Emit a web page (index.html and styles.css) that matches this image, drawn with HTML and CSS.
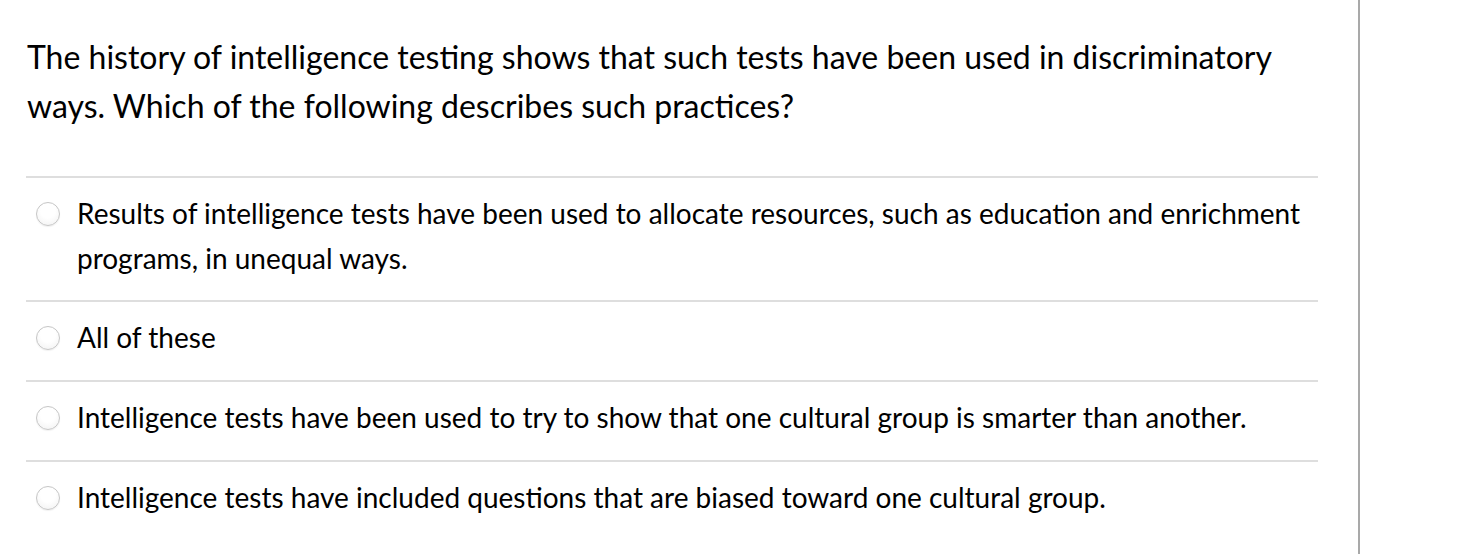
FILE: index.html
```html
<!DOCTYPE html>
<html>
<head>
<meta charset="utf-8">
<link rel="stylesheet" href="styles.css">
</head>
<body>
<div class="page">
  <main class="quiz">
    <div class="question-text">The history of intelligence testing shows that such tests have been used in discriminatory ways. Which of the following describes such practices?</div>
    <div class="answers">
      <label class="answer"><span class="radio"></span><span class="answer-text">Results of intelligence tests have been used to allocate resources, such as education and enrichment programs, in unequal ways.</span></label>
      <label class="answer"><span class="radio"></span><span class="answer-text">All of these</span></label>
      <label class="answer"><span class="radio"></span><span class="answer-text">Intelligence tests have been used to try to show that one cultural group is smarter than another.</span></label>
      <label class="answer"><span class="radio"></span><span class="answer-text">Intelligence tests have included questions that are biased toward one cultural group.</span></label>
    </div>
  </main>
  <aside class="side"></aside>
</div>
</body>
</html>
```
FILE: styles.css
```css
html, body {
  margin: 0;
  padding: 0;
  background: #fff;
}
body {
  font-family: Lato, "Open Sans", sans-serif;
  color: #000;
}
.page {
  display: flex;
  height: 554px;
}
.quiz {
  width: 1360px;
  flex: none;
  box-sizing: border-box;
  border-right: 2px solid #a9a9a9;
  padding: 32px 40px 0 26px;
}
.side {
  flex: 1;
}
.question-text {
  font-size: 32px;
  line-height: 49px;
  padding-left: 1px;
  padding-bottom: 46px;
}
.answers {
  border-top: 2px solid #dedede;
}
.answer {
  display: flex;
  align-items: flex-start;
  padding: 13px 0 20px 0;
  border-bottom: 2px solid #dedede;
}
.answer:first-child {
  padding-bottom: 19px;
}
.answer:last-child {
  border-bottom: none;
}
.radio {
  flex: none;
  box-sizing: border-box;
  width: 24px;
  height: 24px;
  border: 1px solid #c6c6c6;
  border-radius: 50%;
  margin: 11px 17px 0 10px;
  background: radial-gradient(circle at 50% 35%, #ffffff 40%, #f0f0f0 100%);
  box-shadow: 0 1px 1px rgba(0,0,0,0.06);
}
.answer-text {
  font-size: 28px;
  line-height: 45px;
}
```
